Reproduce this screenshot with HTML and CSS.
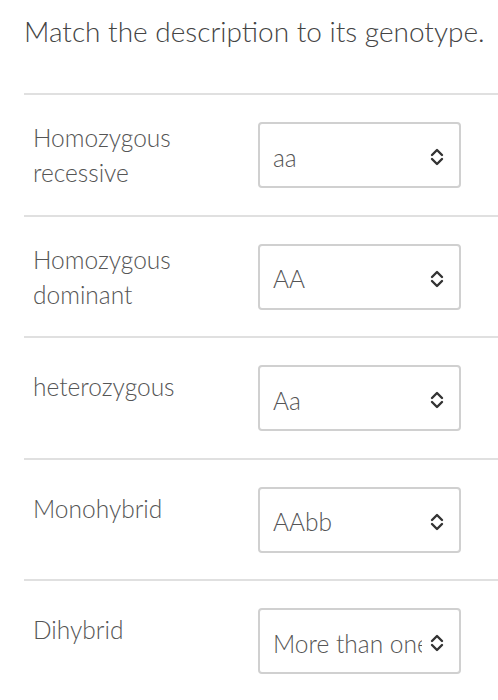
FILE: index.html
```html
<!DOCTYPE html>
<html>
<head>
<meta charset="utf-8">
<link rel="stylesheet" href="styles.css">
</head>
<body>
<div class="page">
  <h1 class="title">Match the description to its genotype.</h1>
  <div class="list">
    <div class="row">
      <div class="label">Homozygous<br>recessive</div>
      <div class="select"><span class="value">aa</span><svg class="chev" viewBox="0 0 14 18" width="14" height="18"><path d="M2 7 L7 2 L12 7 M2 11 L7 16 L12 11" fill="none" stroke="#333" stroke-width="2.4" stroke-linecap="round" stroke-linejoin="round"/></svg></div>
    </div>
    <div class="row">
      <div class="label">Homozygous<br>dominant</div>
      <div class="select"><span class="value">AA</span><svg class="chev" viewBox="0 0 14 18" width="14" height="18"><path d="M2 7 L7 2 L12 7 M2 11 L7 16 L12 11" fill="none" stroke="#333" stroke-width="2.4" stroke-linecap="round" stroke-linejoin="round"/></svg></div>
    </div>
    <div class="row">
      <div class="label single">heterozygous</div>
      <div class="select"><span class="value">Aa</span><svg class="chev" viewBox="0 0 14 18" width="14" height="18"><path d="M2 7 L7 2 L12 7 M2 11 L7 16 L12 11" fill="none" stroke="#333" stroke-width="2.4" stroke-linecap="round" stroke-linejoin="round"/></svg></div>
    </div>
    <div class="row">
      <div class="label single">Monohybrid</div>
      <div class="select"><span class="value">AAbb</span><svg class="chev" viewBox="0 0 14 18" width="14" height="18"><path d="M2 7 L7 2 L12 7 M2 11 L7 16 L12 11" fill="none" stroke="#333" stroke-width="2.4" stroke-linecap="round" stroke-linejoin="round"/></svg></div>
    </div>
    <div class="row">
      <div class="label single">Dihybrid</div>
      <div class="select"><span class="value">More than one</span><svg class="chev" viewBox="0 0 14 18" width="14" height="18"><path d="M2 7 L7 2 L12 7 M2 11 L7 16 L12 11" fill="none" stroke="#333" stroke-width="2.4" stroke-linecap="round" stroke-linejoin="round"/></svg></div>
    </div>
  </div>
</div>
</body>
</html>
```

FILE: styles.css
```css
html, body {
  margin: 0;
  padding: 0;
  background: #fff;
}
.page {
  padding-left: 24px;
  font-family: Lato, "Open Sans", sans-serif;
  font-weight: 300;
}
.title {
  margin: 0;
  padding-top: 13px;
  height: 93px;
  box-sizing: border-box;
  font-size: 28px;
  font-weight: 300;
  color: #444;
  line-height: 36px;
  white-space: nowrap;
}
.list {
  border-top: 2px solid #e0e0e0;
}
.row {
  display: flex;
  align-items: flex-start;
  padding: 27px 0 0 9px;
  border-bottom: 2px solid #e0e0e0;
  height: 121.5px;
  box-sizing: border-box;
}
.label {
  width: 225px;
  font-size: 24.5px;
  line-height: 35px;
  color: #555;
  margin-top: -2px;
}
.label.single {
  margin-top: 4px;
}
.select {
  width: 203px;
  height: 66px;
  box-sizing: border-box;
  border: 2px solid #d0d0d0;
  border-radius: 4px;
  display: flex;
  align-items: center;
  padding: 4px 15px 0 13px;
  gap: 8px;
}
.value {
  flex: 1;
  overflow: hidden;
  white-space: nowrap;
  font-size: 24.5px;
  color: #555;
}
.chev {
  flex: none;
}
```
